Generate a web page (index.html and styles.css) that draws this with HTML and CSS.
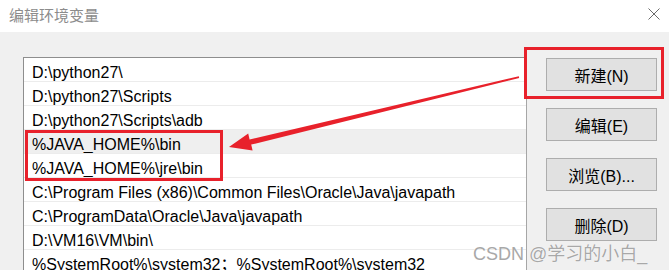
FILE: index.html
```html
<!DOCTYPE html>
<html lang="zh-CN">
<head>
    <meta charset="UTF-8">
    <title>编辑环境变量</title>
    <link rel="stylesheet" href="styles.css">
</head>
<body>
    <div class="window">
        <header class="titlebar">
            <span class="title">编辑环境变量</span>
            <svg class="close" width="12" height="12" viewBox="0 0 12 12">
                <path d="M0.5 0.5 L11.5 11.5 M11.5 0.5 L0.5 11.5" stroke="#6a6a6a" stroke-width="1" fill="none"/>
            </svg>
        </header>

        <main class="content">
            <ul class="path-list">
                <li>D:\python27\</li>
                <li>D:\python27\Scripts</li>
                <li>D:\python27\Scripts\adb</li>
                <li class="selected">%JAVA_HOME%\bin</li>
                <li>%JAVA_HOME%\jre\bin</li>
                <li>C:\Program Files (x86)\Common Files\Oracle\Java\javapath</li>
                <li>C:\ProgramData\Oracle\Java\javapath</li>
                <li>D:\VM16\VM\bin\</li>
                <li>%SystemRoot%\system32；%SystemRoot%\system32</li>
            </ul>

            <div class="buttons">
                <button class="btn">新建(N)</button>
                <button class="btn">编辑(E)</button>
                <button class="btn">浏览(B)...</button>
                <button class="btn">删除(D)</button>
            </div>
        </main>

        <!-- 标注 -->
        <div class="mark mark-new"></div>
        <div class="mark mark-java"></div>
        <svg class="arrow" width="669" height="270" viewBox="0 0 669 270">
            <polygon fill="#e8212b" points="518.8,76.3 519.2,77.9 251.2,144.6 252.6,150.4 229,147 248.2,133.6 249.6,139.6"/>
        </svg>

        <div class="watermark">CSDN @学习的小白_</div>
    </div>
</body>
</html>
```

FILE: styles.css
```css
* {
    margin: 0;
    padding: 0;
    box-sizing: border-box;
}

body {
    width: 669px;
    height: 270px;
    overflow: hidden;
    font-family: 'Liberation Sans', 'Noto Sans CJK SC', sans-serif;
    background-color: #f0f0f0;
}

.window {
    position: relative;
    height: 270px;
}

.titlebar {
    height: 32px;
    background-color: #ffffff;
    display: flex;
    align-items: center;
    justify-content: space-between;
    padding: 0 9px 4px 9px;
}

.title {
    font-size: 15px;
    color: #8c8c8c;
}

.content {
    display: flex;
    gap: 19px;
    padding: 25px 0 0 23px;
}

.path-list {
    list-style: none;
    width: 504px;
    background-color: #ffffff;
    border: 1px solid #8e8e8e;
    border-right-color: #a6a6a6;
    border-bottom: none;
}

.path-list li {
    height: 24px;
    padding: 6px 0 0 8px;
    font-size: 16px;
    line-height: 18px;
    color: #000000;
    white-space: nowrap;
    overflow: hidden;
    border-bottom: 1px solid #ececec;
}

.path-list li.selected {
    background-color: #efefef;
}

.buttons {
    display: flex;
    flex-direction: column;
    gap: 17px;
    padding-top: 1px;
}

.btn {
    width: 111px;
    height: 33px;
    background-color: #e1e1e1;
    border: 1px solid #adadad;
    font-family: 'Liberation Sans', 'Noto Sans CJK SC', sans-serif;
    font-size: 16px;
    color: #000000;
}

.mark {
    position: absolute;
    border: 3px solid #e8212b;
}

.mark-new {
    left: 524px;
    top: 47px;
    width: 140px;
    height: 52px;
}

.mark-java {
    left: 25px;
    top: 130px;
    width: 198px;
    height: 51px;
}

.arrow {
    position: absolute;
    left: 0;
    top: 0;
}

.watermark {
    position: absolute;
    left: 473px;
    top: 239px;
    font-size: 18px;
    color: #a8a8a8;
    text-shadow: 0 0 1px #ffffff, 0 0 1px #ffffff;
    white-space: nowrap;
}
```
